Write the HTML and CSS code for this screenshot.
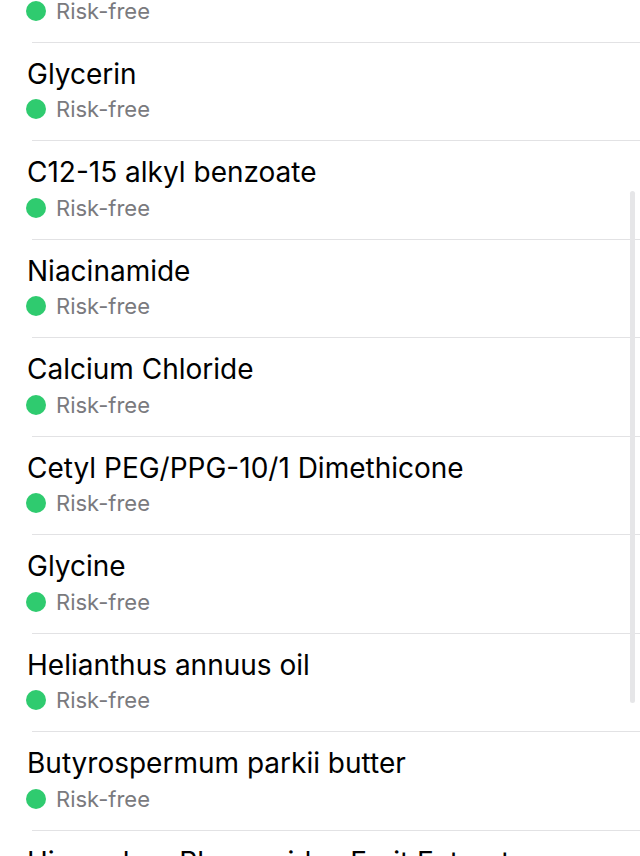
FILE: index.html
```html
<!DOCTYPE html>
<html lang="en">
<head>
<meta charset="utf-8">
<title>Ingredients</title>
<link rel="stylesheet" href="styles.css">
</head>
<body>
<ul class="list">
  <li class="row"><div class="name">Water</div><div class="status"><span class="dot"></span>Risk-free</div></li>
  <li class="row"><div class="name">Glycerin</div><div class="status"><span class="dot"></span>Risk-free</div></li>
  <li class="row"><div class="name">C12-15 alkyl benzoate</div><div class="status"><span class="dot"></span>Risk-free</div></li>
  <li class="row"><div class="name">Niacinamide</div><div class="status"><span class="dot"></span>Risk-free</div></li>
  <li class="row"><div class="name">Calcium Chloride</div><div class="status"><span class="dot"></span>Risk-free</div></li>
  <li class="row"><div class="name">Cetyl PEG/PPG-10/1 Dimethicone</div><div class="status"><span class="dot"></span>Risk-free</div></li>
  <li class="row"><div class="name">Glycine</div><div class="status"><span class="dot"></span>Risk-free</div></li>
  <li class="row"><div class="name">Helianthus annuus oil</div><div class="status"><span class="dot"></span>Risk-free</div></li>
  <li class="row"><div class="name">Butyrospermum parkii butter</div><div class="status"><span class="dot"></span>Risk-free</div></li>
  <li class="row"><div class="name">Hippophae Rhamnoides Fruit Extract</div><div class="status"><span class="dot"></span>Risk-free</div></li>
</ul>
<div class="scrollbar"></div>
</body>
</html>
```
FILE: styles.css
```css
html, body {
  margin: 0;
  padding: 0;
  background: #ffffff;
  overflow: hidden;
  height: 856px;
}
body {
  font-family: Inter, "Noto Sans", "Liberation Sans", sans-serif;
  color: #000;
}
.list {
  list-style: none;
  margin: -56px 0 0 0;
  padding: 0;
}
.row {
  display: flex;
  flex-direction: column;
  padding: 16px 0 0 27px;
}
.row::after {
  content: "";
  display: block;
  height: 1px;
  margin: 17px 0 0 5px;
  background: #e2e2e4;
}
.name {
  font-size: 28px;
  line-height: 31px;
  height: 31px;
  white-space: nowrap;
  letter-spacing: 0;
}
.status {
  margin-top: 5.5px;
  display: flex;
  align-items: center;
  height: 28px;
  font-size: 22px;
  line-height: 28px;
  color: #7a7a7e;
}
.dot {
  width: 20px;
  height: 20px;
  border-radius: 50%;
  background: #2fcb6f;
  margin: 0 10px 0 -1px;
  flex: none;
}
.scrollbar {
  position: absolute;
  left: 630px;
  top: 191px;
  width: 5px;
  height: 512px;
  border-radius: 3px;
  background: #e6e6e8;
}
```
